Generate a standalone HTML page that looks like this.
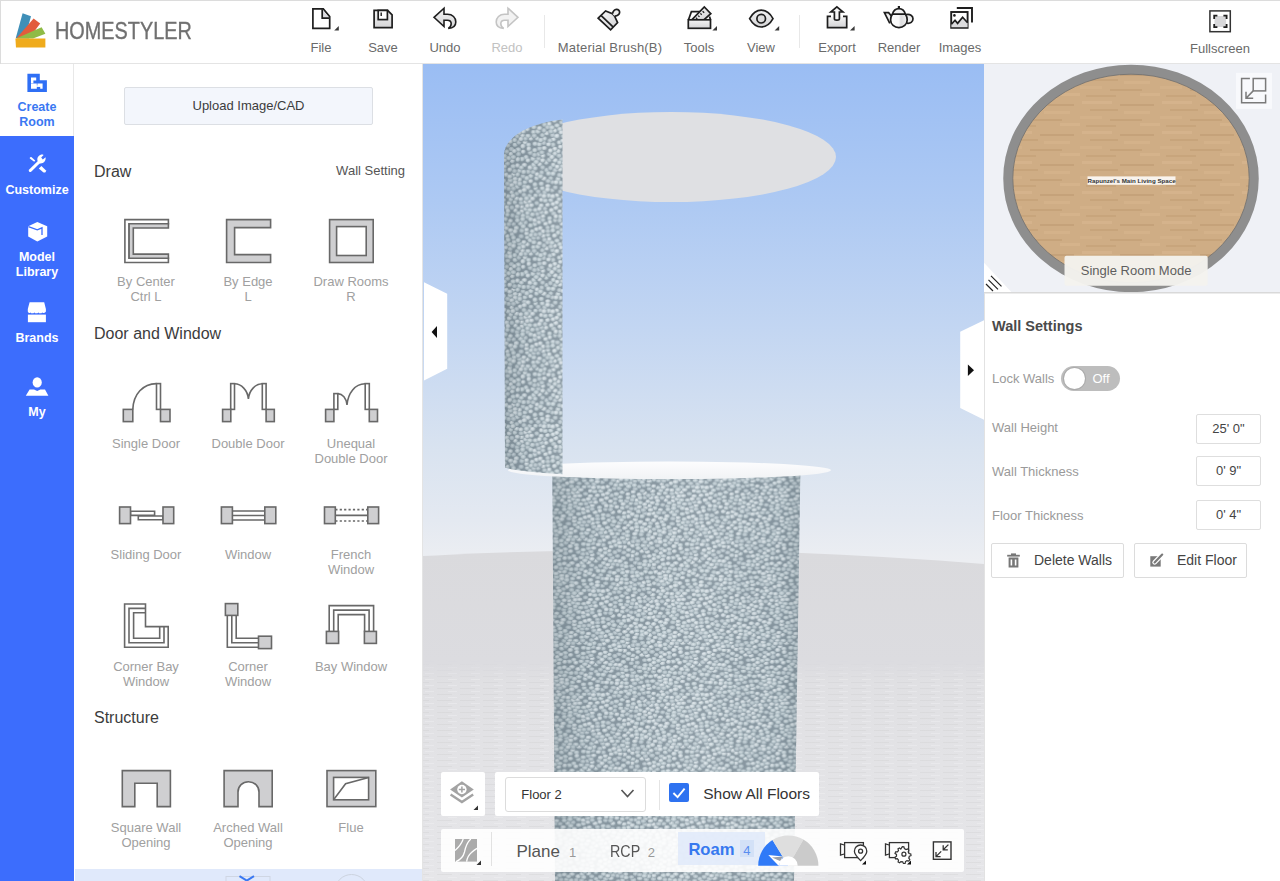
<!DOCTYPE html>
<html><head><meta charset="utf-8">
<style>
*{box-sizing:border-box;margin:0;padding:0}
html,body{width:1280px;height:881px;overflow:hidden;background:#fff;font-family:"Liberation Sans",sans-serif;position:relative}
.abs{position:absolute}
#frame{position:absolute;left:0;top:0;width:1280px;height:64px;border-top:1px solid #dcdcdc;border-left:1px solid #dcdcdc;pointer-events:none;z-index:50}
#header{position:absolute;left:0;top:0;width:1280px;height:64px;background:#fff;border-bottom:1px solid #e4e4e4}
.lbl{position:absolute;top:40px;font-size:13px;line-height:15px;color:#6a6a6a;white-space:nowrap;transform:translateX(-50%)}
.sep{position:absolute;top:15px;width:1px;height:33px;background:#e6e6e6}
#nav{position:absolute;left:0;top:64px;width:74px;height:817px;background:#3c6dfd}
#nav .cr{position:absolute;left:0;top:0;width:74px;height:72px;background:#fff;border-right:1px solid #e8e8e8}
.ni{position:absolute;left:0;width:74px;text-align:center;color:#fff;font-weight:bold;font-size:12.5px;line-height:15px}
#panel{position:absolute;left:75px;top:64px;width:349px;height:817px;background:#fff}
.sh{position:absolute;left:19px;font-size:16px;line-height:19px;color:#3c3c3c;white-space:nowrap}
.il{position:absolute;font-size:13px;line-height:15px;color:#a0a0a0;text-align:center;white-space:nowrap;transform:translateX(-50%);z-index:3}
#view{position:absolute;left:423px;top:64px;width:561px;height:817px;overflow:hidden}
.rl{position:absolute;left:8px;font-size:13px;line-height:15px;color:#9a9a9a;white-space:nowrap}
.inp{position:absolute;left:212px;width:65px;height:29.5px;border:1px solid #dedede;border-radius:2px;font-size:13px;line-height:27.5px;text-align:center;color:#444;background:#fff}
.btn{position:absolute;top:479px;height:35px;border:1px solid #dcdcdc;border-radius:2px;font-size:14px;line-height:33px;color:#444;padding-left:42px;background:#fff;white-space:nowrap}
#right{position:absolute;left:984px;top:64px;width:296px;height:817px;background:#fff}
</style></head><body>
<div id="frame"></div>
<div id="header">
<svg class="abs" style="left:0;top:0" width="60" height="64" viewBox="0 0 60 64">
<polygon points="15.8,38 22.6,13.2 31,16.2 25,38" fill="#3f8fb8"/>
<polygon points="16.2,38.4 33.6,18.4 40.2,23.6 29,38.4" fill="#e25c3c"/>
<polygon points="16,38.6 41.6,27.2 45.4,33.8 33,38.6" fill="#8fbb46"/>
<polygon points="15.4,38.4 45.4,38.4 45.4,47.6 16,47.6" fill="#efab1c"/>
</svg>
<div class="abs" style="left:55px;top:17px;font-size:23.5px;line-height:28px;color:#707070;-webkit-text-stroke:0.35px #707070;transform:scaleX(0.845);transform-origin:0 0;white-space:nowrap">HOMESTYLER</div>
<svg class="abs" style="left:0;top:0" width="1280" height="64" viewBox="0 0 1280 64">
<defs>
<linearGradient id="ig" x1="0" y1="0" x2="1" y2="1"><stop offset="0" stop-color="#fafafa"/><stop offset="1" stop-color="#d2d2d4"/></linearGradient>
<linearGradient id="igv" x1="0" y1="0" x2="0" y2="1"><stop offset="0" stop-color="#f4f4f4"/><stop offset="1" stop-color="#d4d4d6"/></linearGradient>
</defs>
<g fill="none" stroke="#1e1e1e" stroke-width="1.7" stroke-linejoin="miter">
<!-- file -->
<path d="M312.9,8.9 H323.3 L329.7,16.6 V28.3 H312.9 Z" fill="#fff"/>
<path d="M322.2,9.2 V18.2 H329.5" fill="#dcdce0"/>
<!-- save -->
<path d="M374.1,10.4 H387.6 L392.1,14.9 V27.7 H374.1 Z" fill="url(#igv)"/>
<rect x="378.2" y="10.4" width="9.2" height="9.2" fill="#fff"/>
<path d="M381.2,12.5 V16" stroke-width="1.4"/>
<!-- undo -->
<path d="M434,17.3 L444,8.2 V14.3 H447.5 C452.5,14.3 455.8,17.6 455.8,22 C455.8,25.8 452.8,28.2 448.3,28.4 C450.3,27.2 451.2,25.5 451.2,23.8 C451.2,21.6 449.5,20.3 447.3,20.3 H444 V26.5 Z" fill="url(#igv)" stroke-width="1.6"/>
<!-- redo -->
<path d="M497,17.3 L487,8.2 V14.3 H483.5 C478.5,14.3 475.2,17.6 475.2,22 C475.2,25.8 478.2,28.2 482.7,28.4 C480.7,27.2 479.8,25.5 479.8,23.8 C479.8,21.6 481.5,20.3 483.7,20.3 H487 V26.5 Z" fill="#f2f2f2" stroke="#c4c4c4" stroke-width="1.6" transform="translate(21,0)"/>
<!-- brush -->
<path d="M598.2,18.2 L605.6,11 L612.4,13.8 L614.6,16.2 L617.6,22.6 L610.6,29.8 Z" fill="url(#ig)"/>
<path d="M601.2,15.6 L613,26.8" />
<path d="M612.4,13.8 C613,11.5 614.2,9.6 616.4,9.4 C618.6,9.3 619.8,11 619.6,12.6 C619.4,14.6 617,15.8 614.6,16.2" fill="#eee"/>
<!-- tools -->
<path d="M688.5,19.8 L691.4,11.6 H700.5" />
<path d="M709.5,16.4 L710.5,19.8" />
<path d="M691.8,19.8 L704.3,7 L710.8,13.6 L703.8,19.8 Z" fill="url(#ig)"/>
<path d="M696,17.8 l1.3,1.3 M698.2,15.6 l1.3,1.3 M700.4,13.4 l1.3,1.3 M702.6,11.2 l1.6,1.6" stroke-width="1.3"/>
<rect x="688.3" y="19.8" width="22.2" height="8.5" fill="url(#igv)"/>
<!-- view -->
<path d="M749.6,18.6 C753,12.6 757,10.2 761.3,10.2 C765.6,10.2 769.6,12.6 773,18.6 C769.6,24.6 765.6,27 761.3,27 C757,27 753,24.6 749.6,18.6 Z" fill="url(#igv)"/>
<circle cx="761.2" cy="18.7" r="4.3" fill="#ddd"/>
<!-- export -->
<path d="M831,16.4 H827.5 V27.6 H846.7 V16.4 H843" fill="url(#igv)"/>
<path d="M836.9,6.8 L843,12 H839.4 V18.8 C839.4,19.8 838.6,20.2 836.9,20.2 C835.2,20.2 834.4,19.8 834.4,18.8 V12 H830.8 Z" fill="#f6f6f6"/>
<!-- render teapot -->
<linearGradient id="tpg" x1="0" y1="0" x2="1" y2="0"><stop offset="0" stop-color="#fff"/><stop offset="0.5" stop-color="#fafafa"/><stop offset="0.62" stop-color="#dcdcde"/><stop offset="1" stop-color="#f0f0f0"/></linearGradient>
<path d="M891.6,16.2 L888.6,12.6 H884.4 L889.8,23.4" fill="#eee"/>
<path d="M906,14.6 C910,13.6 913,15.8 913,18.8 C913,21.8 910.4,23.8 906.8,23.2" fill="#eee"/>
<path d="M892.4,14.2 H905.4 C906.6,15.8 907.2,18 907.2,20 C907.2,24.4 903.4,27.6 898.9,27.6 C894.4,27.6 890.6,24.4 890.6,20 C890.6,18 891.2,15.8 892.4,14.2 Z" fill="url(#tpg)"/>
<path d="M892.4,14.2 C893.4,10.6 895.8,8.6 898.9,8.6 C902,8.6 904.4,10.6 905.4,14.2 Z" fill="#f4f4f4"/>
<path d="M898.9,6 V8.6" stroke-width="2.2"/>
<!-- images -->
<path d="M956.8,8 H972 V22.4" stroke-width="1.9"/>
<rect x="951.2" y="12" width="16.4" height="15.8" fill="#fff" stroke-width="1.9"/>
<path d="M951.4,24.6 L955,20.4 L957.6,23.6 L962.6,17.4 L967.6,23 V27.2 H951.4 Z" fill="#dcdcde" stroke="none"/>
<path d="M951.4,24.2 L955,20.2 L957.6,23.4 L962.6,17.2 L967.6,22.8" stroke-width="1.7"/>
<circle cx="954.4" cy="15.4" r="1.3" fill="#1e1e1e" stroke="none"/>
<!-- fullscreen -->
<rect x="1209.9" y="10.9" width="20.4" height="20.8" stroke="#333" stroke-width="1.5" fill="#fff"/>
<rect x="1214.5" y="16" width="11.6" height="11" fill="#d8d8da" stroke="none"/>
<path d="M1214.2,19 V15.7 H1217.4 M1223.4,15.7 H1226.6 V19 M1226.6,24 V27.2 H1223.4 M1217.4,27.2 H1214.2 V24" stroke-width="1.8"/>
</g>
<g fill="#3a3a3a">
<path d="M334.2,30.6 L338.8,26 V30.6 Z"/>
<path d="M712.4,30.6 L717,26 V30.6 Z"/>
<path d="M774.6,30.6 L779.2,26 V30.6 Z"/>
<path d="M850,30.6 L854.6,26 V30.6 Z"/>
</g>
<rect x="544" y="15" width="1" height="33" fill="#e8e8e8"/>
<rect x="799" y="15" width="1" height="33" fill="#e8e8e8"/>
</svg>
<div class="lbl" style="left:321px">File</div>
<div class="lbl" style="left:383px">Save</div>
<div class="lbl" style="left:445px">Undo</div>
<div class="lbl" style="left:507px;color:#c2c2c2">Redo</div>
<div class="lbl" style="left:610px;letter-spacing:0.2px">Material Brush(B)</div>
<div class="lbl" style="left:699px">Tools</div>
<div class="lbl" style="left:761px">View</div>
<div class="lbl" style="left:837px">Export</div>
<div class="lbl" style="left:899px">Render</div>
<div class="lbl" style="left:960px">Images</div>
<div class="lbl" style="left:1220px;top:41px">Fullscreen</div>
</div>
<div id="nav"><div class="cr"></div>
<svg class="abs" style="left:0;top:-64px" width="74" height="420" viewBox="0 0 74 420">
<g fill="#2f6ff5">
<path d="M27.4,73.8 H39.8 V80.2 H46.9 V92 H27.4 Z"/>
</g>
<g fill="#fff">
<path d="M31,77.6 H36.2 V80.4 H33.4 V83.2 H31 Z"/>
<path d="M31,83.4 H36.8 V85.4 H40 V86.8 H36.8 V88.8 H31 Z"/>
<path d="M37.4,83.4 H42.6 V88.8 H40.2 V86.8 H37.4 Z" />
</g>
<g fill="#fff" stroke="none">
<path d="M29.2,169.4 L38.4,160.4 L40.6,162.6 L31.4,171.6 Q30.2,172.6 29.1,171.6 Q28.2,170.5 29.2,169.4 Z"/>
<path d="M38,161.6 C36.6,159.2 37.6,156.2 40.2,155 C41.4,154.5 42.6,154.5 43.6,154.9 L41.2,157.4 L42.8,159.4 L45.6,157.2 C46,159.6 45,161.8 42.8,163 C41.4,163.6 40,163.6 39,163.2 Z"/>
<path d="M29.8,158.6 C29.4,157.6 30.6,156.6 31.6,157.2 L35.2,160.6 L34.2,161.8 Z"/>
<path d="M38.8,168.6 L41.4,166 L45.8,170.2 Q46.4,171.6 45.2,172.4 Q44.2,172.8 43.2,172.2 Z"/>
</g>
<path d="M37.3,222 L47.2,226.2 V236.4 L37.3,241.6 L28.2,236.4 V226.2 Z" fill="#fff"/>
<path d="M28.4,226.6 L37.3,229.8 L42,227.8 V235" fill="none" stroke="#3c6dfd" stroke-width="1.3"/>
<path d="M29.6,302.2 H44.2 L45.9,309 V311.6 C45.2,313.2 43.6,313.4 42.3,312.4 C41.2,313.6 39.4,313.6 38.4,312.4 C37.2,313.6 35.4,313.6 34.4,312.4 C33.2,313.6 31.4,313.6 30.4,312.4 C29.4,313.4 28.2,313.2 27.8,311.6 V309 Z" fill="#fff"/>
<rect x="27.9" y="314.6" width="18" height="7.6" fill="#fff"/>
<ellipse cx="37.2" cy="382.4" rx="4.6" ry="5.2" fill="#fff"/>
<path d="M29.6,389.4 H34 L37.2,391 L40.4,389.4 H45 L48.4,395.8 H25.8 Z" fill="#fff"/>
</svg>
<div class="ni" style="top:36px;color:#3a78f2">Create<br>Room</div>
<div class="ni" style="top:119px">Customize</div>
<div class="ni" style="top:186px">Model<br>Library</div>
<div class="ni" style="top:267px">Brands</div>
<div class="ni" style="top:341px">My</div>
</div>
<div id="panel">
<div class="abs" style="left:49px;top:23px;width:249px;height:38px;background:#f3f6fc;border:1px solid #dcdfe4;border-radius:2px;font-size:13px;line-height:36px;text-align:center;color:#3c3c3c">Upload Image/CAD</div>
<div class="sh" style="top:98px">Draw</div>
<div class="abs" style="right:19px;top:99px;font-size:13px;line-height:15px;color:#555">Wall Setting</div>
<div class="sh" style="top:260px">Door and Window</div>
<div class="sh" style="top:644px">Structure</div>
</div>
<svg class="abs" style="left:0;top:0;z-index:2" width="424" height="881" viewBox="0 0 424 881">
<g stroke="#686868" stroke-width="1.6" fill="#fff">
<!-- by center -->
<path d="M168.4,219.6 H124.9 V262.5 H168.4 V258.3 H129.1 V223.8 H168.4 Z"/>
<path d="M168.4,223.8 H129.1 V258.3 H168.4 V254.1 H133.3 V228 H168.4 Z" fill="#cfcfd1"/>
<!-- by edge -->
<path d="M270.6,219.6 H226.6 V262.5 H270.6 V254.6 H234.6 V227.6 H270.6 Z" fill="#cfcfd1"/>
<!-- draw rooms -->
<rect x="329.6" y="219.6" width="43.6" height="42.9" fill="#cfcfd1"/>
<rect x="336.6" y="226.6" width="29.6" height="28.9" fill="#fff"/>
<!-- single door -->
<path d="M132.8,409.4 C133.4,394 143,383.8 156.5,383.6" fill="none"/>
<rect x="156.5" y="383.6" width="4" height="25.8"/>
<rect x="123.3" y="409.4" width="9.5" height="12.2" fill="#cfcfd1"/>
<rect x="160.5" y="409.4" width="9.5" height="12.2" fill="#cfcfd1"/>
<!-- double door -->
<path d="M234.5,383.8 C241.5,384 247.5,390 248.4,398.8 C249.3,390 255.3,384 262.3,383.8" fill="none"/>
<rect x="230.7" y="383.6" width="3.8" height="25.8"/>
<rect x="262.3" y="383.6" width="3.8" height="25.8"/>
<rect x="222.6" y="409.4" width="8.2" height="12.2" fill="#cfcfd1"/>
<rect x="266.1" y="409.4" width="8.2" height="12.2" fill="#cfcfd1"/>
<!-- unequal -->
<path d="M337.8,393.6 C342.5,393.8 346.4,398 347,405 C348,393 355,384 365,383.8" fill="none"/>
<rect x="333.9" y="393.6" width="3.9" height="15.8"/>
<rect x="365.2" y="383.6" width="4.1" height="25.8"/>
<rect x="325.6" y="409.4" width="8.3" height="12.2" fill="#cfcfd1"/>
<rect x="369.3" y="409.4" width="8.2" height="12.2" fill="#cfcfd1"/>
<!-- sliding door -->
<path d="M130.5,511.2 H154.6 V515.4 H130.5 Z"/>
<path d="M138.3,516 H163 V519.8 H138.3 Z"/>
<rect x="119.6" y="507" width="10.9" height="16.6" fill="#cfcfd1"/>
<rect x="163" y="507" width="10.7" height="16.6" fill="#cfcfd1"/>
<!-- window -->
<path d="M232.4,511 H264.8 M232.4,515.5 H264.8 M232.4,520 H264.8" fill="none"/>
<rect x="221.4" y="507" width="11" height="16.6" fill="#cfcfd1"/>
<rect x="264.8" y="507" width="11" height="16.6" fill="#cfcfd1"/>
<!-- french window -->
<path d="M335.3,515.4 H367.8" fill="none"/>
<path d="M335.3,509.6 H367.8 M335.3,521 H367.8" fill="none" stroke-dasharray="2.2,2.2"/>
<rect x="324.5" y="507" width="10.8" height="16.6" fill="#cfcfd1"/>
<rect x="367.8" y="507" width="10.8" height="16.6" fill="#cfcfd1"/>
<!-- corner bay -->
<path d="M124.6,604 H145.5 V626.6 H168.2 V647.2 H124.6 Z"/>
<path d="M145.5,608.4 H129 V642.7 H164 V626.6" fill="none"/>
<path d="M145.5,612.8 H133.6 V638.3 H159.7 V626.6" fill="none"/>
<!-- corner window -->
<path d="M227.3,615.4 V647.2 H258.5 M231.8,615.4 V642.7 H258.5 M236.2,615.4 V638.2 H258.5" fill="none"/>
<rect x="225.4" y="603.6" width="12.4" height="11.8" fill="#cfcfd1"/>
<rect x="258.5" y="636.2" width="13" height="12.4" fill="#cfcfd1"/>
<!-- bay window -->
<path d="M329.2,631.4 V605.6 H373.6 V631.4 M333.7,631.4 V610.1 H369.1 V631.4 M338.2,631.4 V614.6 H364.6 V631.4" fill="none"/>
<rect x="326.4" y="631.4" width="12.2" height="12" fill="#cfcfd1"/>
<rect x="364.4" y="631.4" width="12" height="12" fill="#cfcfd1"/>
<!-- square opening -->
<path d="M122.3,806.6 V770.6 H170.4 V806.6 H157.2 V783.2 H134.8 V806.6 Z" fill="#cfcfd1"/>
<!-- arched -->
<path d="M224.1,806.6 V770.6 H272.2 V806.6 H259 V792 C259,786 254.4,781.8 248.5,781.8 C242.6,781.8 238,786 238,792 V806.6 Z" fill="#cfcfd1"/>
<!-- flue -->
<rect x="327" y="770.6" width="48.8" height="36" fill="#cfcfd1"/>
<rect x="333.6" y="777.4" width="35" height="22.4"/>
<path d="M333.6,799.8 L345.6,783.8 L368.6,777.4" fill="none"/>
</g>
</svg>
<div class="il" style="left:146px;top:274px">By Center<br>Ctrl L</div>
<div class="il" style="left:248px;top:274px">By Edge<br>L</div>
<div class="il" style="left:351px;top:274px">Draw Rooms<br>R</div>
<div class="il" style="left:146px;top:436px">Single Door</div>
<div class="il" style="left:248px;top:436px">Double Door</div>
<div class="il" style="left:351px;top:436px">Unequal<br>Double Door</div>
<div class="il" style="left:146px;top:547px">Sliding Door</div>
<div class="il" style="left:248px;top:547px">Window</div>
<div class="il" style="left:351px;top:547px">French<br>Window</div>
<div class="il" style="left:146px;top:659px">Corner Bay<br>Window</div>
<div class="il" style="left:248px;top:659px">Corner<br>Window</div>
<div class="il" style="left:351px;top:659px">Bay Window</div>
<div class="il" style="left:146px;top:820px">Square Wall<br>Opening</div>
<div class="il" style="left:248px;top:820px">Arched Wall<br>Opening</div>
<div class="il" style="left:351px;top:820px">Flue</div>
<div class="abs" style="left:75px;top:869px;width:347px;height:12px;background:#e0e9fb"></div>
<div class="abs" style="left:422px;top:64px;width:1px;height:817px;background:#e4e4e4;z-index:4"></div>
<svg class="abs" style="left:0;top:860px;z-index:3" width="424" height="21" viewBox="0 860 424 21">
<rect x="226" y="876.5" width="44" height="10" fill="none" stroke="#cfd6e3" stroke-width="1"/>
<path d="M239.5,876.2 L246.8,880.6 L254,876.2" fill="none" stroke="#3a78f2" stroke-width="2"/>
<circle cx="351.5" cy="891" r="16.5" fill="none" stroke="#ccd3df" stroke-width="1"/>
</svg>

<div id="view">
<svg class="abs" style="left:0;top:0" width="561" height="817" viewBox="423 64 561 817">
<defs>
<linearGradient id="sky" x1="0" y1="64" x2="0" y2="560" gradientUnits="userSpaceOnUse">
<stop offset="0" stop-color="#9abdf3"/><stop offset="0.274" stop-color="#adc9f3"/><stop offset="0.536" stop-color="#c3d6f2"/><stop offset="0.778" stop-color="#d9e3f0"/><stop offset="0.92" stop-color="#e4e9f1"/><stop offset="1" stop-color="#eceef2"/>
</linearGradient>
<linearGradient id="gnd" x1="0" y1="550" x2="0" y2="881" gradientUnits="userSpaceOnUse">
<stop offset="0" stop-color="#dadadd"/><stop offset="0.34" stop-color="#dcdce0"/><stop offset="0.4" stop-color="#e0e0e3"/><stop offset="0.65" stop-color="#e3e3e6"/><stop offset="1" stop-color="#e6e6e9"/>
</linearGradient>
<radialGradient id="pga" cx="0.45" cy="0.4" r="0.56"><stop offset="0" stop-color="#dae3e8"/><stop offset="0.62" stop-color="#bccad0"/><stop offset="0.9" stop-color="#9babb3"/><stop offset="1" stop-color="#8a99a2"/></radialGradient>
<radialGradient id="pgb" cx="0.5" cy="0.42" r="0.56"><stop offset="0" stop-color="#ced9df"/><stop offset="0.62" stop-color="#b2c0c7"/><stop offset="0.9" stop-color="#95a5ae"/><stop offset="1" stop-color="#8695a0"/></radialGradient>
<radialGradient id="pgc" cx="0.4" cy="0.38" r="0.56"><stop offset="0" stop-color="#e4ebef"/><stop offset="0.62" stop-color="#c4d0d6"/><stop offset="0.9" stop-color="#a1b0b8"/><stop offset="1" stop-color="#8e9da6"/></radialGradient>
<pattern id="peb" width="144" height="144" patternUnits="userSpaceOnUse" patternTransform="scale(0.72)"><rect width="144" height="144" fill="#8796a0"/><ellipse cx="46.6" cy="21.7" rx="4.2" ry="2.9" fill="url(#pgc)"/><ellipse cx="77.2" cy="52.7" rx="3.8" ry="3.1" fill="url(#pga)"/><ellipse cx="5.4" cy="62.4" rx="3.8" ry="2.9" fill="url(#pga)"/><ellipse cx="61.1" cy="119.1" rx="3.9" ry="3.0" fill="url(#pgc)"/><ellipse cx="90.4" cy="136.5" rx="4.1" ry="3.1" fill="url(#pga)"/><ellipse cx="-3.4" cy="6.7" rx="4.3" ry="3.0" fill="url(#pgb)"/><ellipse cx="140.6" cy="6.7" rx="4.3" ry="3.0" fill="url(#pgb)"/><ellipse cx="20.8" cy="17.0" rx="4.0" ry="3.2" fill="url(#pgc)"/><ellipse cx="26.0" cy="83.8" rx="4.2" ry="3.0" fill="url(#pgb)"/><ellipse cx="78.9" cy="9.0" rx="3.8" ry="3.0" fill="url(#pga)"/><ellipse cx="98.0" cy="61.6" rx="4.0" ry="3.1" fill="url(#pgc)"/><ellipse cx="65.3" cy="43.2" rx="4.3" ry="3.2" fill="url(#pga)"/><ellipse cx="35.1" cy="82.7" rx="4.1" ry="3.3" fill="url(#pgb)"/><ellipse cx="105.0" cy="41.5" rx="4.4" ry="2.9" fill="url(#pgc)"/><ellipse cx="60.2" cy="109.0" rx="3.9" ry="3.1" fill="url(#pga)"/><ellipse cx="5.6" cy="96.2" rx="4.3" ry="3.1" fill="url(#pga)"/><ellipse cx="126.1" cy="45.2" rx="4.2" ry="3.1" fill="url(#pgc)"/><ellipse cx="83.5" cy="65.7" rx="4.3" ry="3.3" fill="url(#pgc)"/><ellipse cx="68.3" cy="95.6" rx="3.8" ry="3.2" fill="url(#pgc)"/><ellipse cx="93.2" cy="-1.0" rx="4.3" ry="3.0" fill="url(#pgc)"/><ellipse cx="93.2" cy="143.0" rx="4.3" ry="3.0" fill="url(#pgc)"/><ellipse cx="55.6" cy="96.3" rx="3.8" ry="3.1" fill="url(#pgc)"/><ellipse cx="8.5" cy="110.6" rx="3.9" ry="3.0" fill="url(#pgc)"/><ellipse cx="56.3" cy="125.5" rx="3.8" ry="3.1" fill="url(#pgb)"/><ellipse cx="79.1" cy="127.2" rx="4.3" ry="3.2" fill="url(#pgb)"/><ellipse cx="40.1" cy="59.8" rx="4.0" ry="3.3" fill="url(#pga)"/><ellipse cx="137.9" cy="21.7" rx="3.9" ry="3.0" fill="url(#pga)"/><ellipse cx="33.6" cy="69.8" rx="4.2" ry="3.0" fill="url(#pgb)"/><ellipse cx="53.2" cy="81.6" rx="4.4" ry="3.2" fill="url(#pga)"/><ellipse cx="74.2" cy="88.9" rx="4.2" ry="2.9" fill="url(#pgb)"/><ellipse cx="129.5" cy="112.3" rx="4.3" ry="3.2" fill="url(#pgb)"/><ellipse cx="56.5" cy="57.5" rx="3.9" ry="3.2" fill="url(#pgc)"/><ellipse cx="9.0" cy="9.7" rx="3.9" ry="3.0" fill="url(#pgc)"/><ellipse cx="49.0" cy="7.6" rx="3.8" ry="3.0" fill="url(#pgc)"/><ellipse cx="14.6" cy="52.4" rx="3.8" ry="3.2" fill="url(#pgc)"/><ellipse cx="88.4" cy="21.4" rx="4.0" ry="3.0" fill="url(#pga)"/><ellipse cx="52.4" cy="17.7" rx="4.3" ry="3.3" fill="url(#pga)"/><ellipse cx="67.1" cy="69.7" rx="3.9" ry="2.9" fill="url(#pga)"/><ellipse cx="49.3" cy="38.1" rx="4.3" ry="3.0" fill="url(#pgb)"/><ellipse cx="3.3" cy="136.9" rx="4.1" ry="3.0" fill="url(#pgc)"/><ellipse cx="147.3" cy="136.9" rx="4.1" ry="3.0" fill="url(#pgc)"/><ellipse cx="78.2" cy="3.9" rx="4.1" ry="3.3" fill="url(#pgc)"/><ellipse cx="78.2" cy="147.9" rx="4.1" ry="3.3" fill="url(#pgc)"/><ellipse cx="124.3" cy="100.3" rx="4.0" ry="3.0" fill="url(#pgc)"/><ellipse cx="24.1" cy="111.2" rx="4.1" ry="3.2" fill="url(#pgc)"/><ellipse cx="47.5" cy="32.1" rx="4.3" ry="3.3" fill="url(#pgb)"/><ellipse cx="122.8" cy="116.1" rx="4.3" ry="3.2" fill="url(#pgc)"/><ellipse cx="32.7" cy="74.5" rx="4.0" ry="2.9" fill="url(#pga)"/><ellipse cx="4.0" cy="40.2" rx="4.0" ry="3.2" fill="url(#pgc)"/><ellipse cx="148.0" cy="40.2" rx="4.0" ry="3.2" fill="url(#pgc)"/><ellipse cx="137.7" cy="64.4" rx="4.4" ry="3.3" fill="url(#pgb)"/><ellipse cx="137.5" cy="52.5" rx="3.9" ry="3.0" fill="url(#pgb)"/><ellipse cx="28.3" cy="29.4" rx="4.2" ry="3.3" fill="url(#pgb)"/><ellipse cx="121.0" cy="69.0" rx="4.2" ry="3.2" fill="url(#pgb)"/><ellipse cx="12.2" cy="95.1" rx="4.3" ry="3.2" fill="url(#pgb)"/><ellipse cx="108.0" cy="68.8" rx="3.9" ry="3.2" fill="url(#pgb)"/><ellipse cx="47.9" cy="115.3" rx="4.4" ry="3.1" fill="url(#pgc)"/><ellipse cx="57.8" cy="136.3" rx="4.2" ry="3.0" fill="url(#pgb)"/><ellipse cx="18.3" cy="21.8" rx="4.3" ry="3.2" fill="url(#pgc)"/><ellipse cx="21.0" cy="119.0" rx="4.4" ry="3.2" fill="url(#pgc)"/><ellipse cx="18.9" cy="2.1" rx="4.4" ry="3.2" fill="url(#pgc)"/><ellipse cx="18.9" cy="146.1" rx="4.4" ry="3.2" fill="url(#pgc)"/><ellipse cx="75.8" cy="134.4" rx="4.1" ry="3.2" fill="url(#pgb)"/><ellipse cx="119.0" cy="30.4" rx="4.0" ry="3.0" fill="url(#pgc)"/><ellipse cx="18.9" cy="131.0" rx="4.0" ry="3.1" fill="url(#pgb)"/><ellipse cx="84.0" cy="130.2" rx="4.1" ry="3.3" fill="url(#pga)"/><ellipse cx="72.2" cy="76.6" rx="4.1" ry="2.9" fill="url(#pgb)"/><ellipse cx="63.4" cy="26.4" rx="3.8" ry="3.2" fill="url(#pgb)"/><ellipse cx="24.8" cy="68.2" rx="4.2" ry="3.1" fill="url(#pga)"/><ellipse cx="46.9" cy="74.6" rx="4.1" ry="3.2" fill="url(#pgc)"/><ellipse cx="15.3" cy="80.7" rx="3.9" ry="3.0" fill="url(#pgc)"/><ellipse cx="111.2" cy="73.1" rx="4.1" ry="3.2" fill="url(#pga)"/><ellipse cx="131.4" cy="63.8" rx="4.2" ry="3.1" fill="url(#pgb)"/><ellipse cx="73.8" cy="99.8" rx="4.1" ry="3.1" fill="url(#pgb)"/><ellipse cx="68.8" cy="135.6" rx="4.2" ry="3.3" fill="url(#pga)"/><ellipse cx="135.7" cy="37.4" rx="4.1" ry="3.3" fill="url(#pga)"/><ellipse cx="121.0" cy="19.7" rx="3.9" ry="3.1" fill="url(#pgc)"/><ellipse cx="10.4" cy="34.7" rx="3.8" ry="3.2" fill="url(#pgc)"/><ellipse cx="112.9" cy="129.2" rx="3.9" ry="3.2" fill="url(#pga)"/><ellipse cx="95.1" cy="20.6" rx="4.3" ry="3.3" fill="url(#pga)"/><ellipse cx="31.6" cy="137.2" rx="4.0" ry="3.1" fill="url(#pgb)"/><ellipse cx="-1.5" cy="119.9" rx="3.9" ry="3.1" fill="url(#pga)"/><ellipse cx="142.5" cy="119.9" rx="3.9" ry="3.1" fill="url(#pga)"/><ellipse cx="28.2" cy="45.9" rx="4.2" ry="2.9" fill="url(#pgc)"/><ellipse cx="2.6" cy="47.7" rx="4.2" ry="3.1" fill="url(#pgb)"/><ellipse cx="146.6" cy="47.7" rx="4.2" ry="3.1" fill="url(#pgb)"/><ellipse cx="9.3" cy="-2.1" rx="4.3" ry="3.3" fill="url(#pgc)"/><ellipse cx="9.3" cy="141.9" rx="4.3" ry="3.3" fill="url(#pgc)"/><ellipse cx="15.1" cy="38.2" rx="3.8" ry="3.2" fill="url(#pgc)"/><ellipse cx="38.9" cy="18.7" rx="4.1" ry="3.3" fill="url(#pgc)"/><ellipse cx="117.9" cy="37.2" rx="3.9" ry="3.3" fill="url(#pgb)"/><ellipse cx="82.2" cy="100.9" rx="3.9" ry="2.9" fill="url(#pgb)"/><ellipse cx="10.4" cy="135.1" rx="4.2" ry="3.2" fill="url(#pgc)"/><ellipse cx="12.1" cy="123.3" rx="3.8" ry="3.2" fill="url(#pga)"/><ellipse cx="65.3" cy="48.8" rx="4.1" ry="3.3" fill="url(#pgb)"/><ellipse cx="75.9" cy="34.3" rx="3.9" ry="3.0" fill="url(#pgc)"/><ellipse cx="7.3" cy="29.1" rx="4.0" ry="3.0" fill="url(#pgc)"/><ellipse cx="72.0" cy="25.6" rx="4.0" ry="2.9" fill="url(#pgc)"/><ellipse cx="36.1" cy="2.2" rx="4.2" ry="3.1" fill="url(#pgc)"/><ellipse cx="36.1" cy="146.2" rx="4.2" ry="3.1" fill="url(#pgc)"/><ellipse cx="134.6" cy="15.3" rx="4.3" ry="3.1" fill="url(#pgb)"/><ellipse cx="71.3" cy="120.2" rx="4.0" ry="3.1" fill="url(#pgc)"/><ellipse cx="99.0" cy="-2.5" rx="4.0" ry="3.2" fill="url(#pgc)"/><ellipse cx="99.0" cy="141.5" rx="4.0" ry="3.2" fill="url(#pgc)"/><ellipse cx="101.8" cy="91.6" rx="4.0" ry="3.0" fill="url(#pga)"/><ellipse cx="7.8" cy="18.7" rx="3.8" ry="3.2" fill="url(#pga)"/><ellipse cx="36.8" cy="23.5" rx="3.9" ry="3.2" fill="url(#pgb)"/><ellipse cx="40.6" cy="34.9" rx="4.0" ry="3.1" fill="url(#pgc)"/><ellipse cx="37.9" cy="138.5" rx="4.4" ry="3.1" fill="url(#pgc)"/><ellipse cx="44.6" cy="51.3" rx="3.8" ry="3.1" fill="url(#pga)"/><ellipse cx="12.9" cy="57.5" rx="3.8" ry="2.9" fill="url(#pgb)"/><ellipse cx="84.3" cy="76.2" rx="4.3" ry="3.2" fill="url(#pga)"/><ellipse cx="103.1" cy="126.6" rx="4.0" ry="3.0" fill="url(#pgc)"/><ellipse cx="6.3" cy="120.3" rx="4.3" ry="3.2" fill="url(#pgb)"/><ellipse cx="105.7" cy="117.0" rx="3.9" ry="3.1" fill="url(#pgb)"/><ellipse cx="115.9" cy="119.0" rx="4.2" ry="3.3" fill="url(#pgc)"/><ellipse cx="98.3" cy="99.8" rx="3.9" ry="2.9" fill="url(#pgb)"/><ellipse cx="80.4" cy="90.4" rx="4.2" ry="3.2" fill="url(#pgc)"/><ellipse cx="70.5" cy="0.5" rx="4.3" ry="3.2" fill="url(#pgb)"/><ellipse cx="70.5" cy="144.5" rx="4.3" ry="3.2" fill="url(#pgb)"/><ellipse cx="94.9" cy="9.5" rx="4.2" ry="3.0" fill="url(#pgb)"/><ellipse cx="105.0" cy="29.6" rx="4.2" ry="3.3" fill="url(#pga)"/><ellipse cx="71.1" cy="55.1" rx="4.1" ry="3.2" fill="url(#pga)"/><ellipse cx="110.4" cy="88.8" rx="4.2" ry="2.9" fill="url(#pgc)"/><ellipse cx="21.2" cy="36.6" rx="4.2" ry="3.0" fill="url(#pga)"/><ellipse cx="97.3" cy="41.9" rx="4.1" ry="3.1" fill="url(#pgb)"/><ellipse cx="67.2" cy="17.1" rx="4.3" ry="3.0" fill="url(#pgb)"/><ellipse cx="-3.1" cy="134.8" rx="3.8" ry="3.1" fill="url(#pgc)"/><ellipse cx="140.9" cy="134.8" rx="3.8" ry="3.1" fill="url(#pgc)"/><ellipse cx="118.1" cy="139.4" rx="4.1" ry="3.0" fill="url(#pga)"/><ellipse cx="20.4" cy="75.5" rx="4.4" ry="3.0" fill="url(#pga)"/><ellipse cx="118.1" cy="73.3" rx="4.3" ry="3.2" fill="url(#pga)"/><ellipse cx="33.3" cy="129.3" rx="4.1" ry="2.9" fill="url(#pgc)"/><ellipse cx="0.5" cy="70.8" rx="4.1" ry="3.0" fill="url(#pga)"/><ellipse cx="144.5" cy="70.8" rx="4.1" ry="3.0" fill="url(#pga)"/><ellipse cx="20.3" cy="49.5" rx="4.0" ry="3.2" fill="url(#pga)"/><ellipse cx="0.3" cy="108.1" rx="4.3" ry="2.9" fill="url(#pga)"/><ellipse cx="144.3" cy="108.1" rx="4.3" ry="2.9" fill="url(#pga)"/><ellipse cx="133.4" cy="102.7" rx="4.3" ry="3.0" fill="url(#pgb)"/><ellipse cx="-0.2" cy="84.8" rx="4.0" ry="3.1" fill="url(#pga)"/><ellipse cx="143.8" cy="84.8" rx="4.0" ry="3.1" fill="url(#pga)"/><ellipse cx="39.6" cy="7.0" rx="3.9" ry="3.2" fill="url(#pgb)"/><ellipse cx="35.9" cy="38.3" rx="4.1" ry="3.0" fill="url(#pgb)"/><ellipse cx="90.8" cy="131.5" rx="4.4" ry="3.1" fill="url(#pgc)"/><ellipse cx="103.6" cy="7.1" rx="4.2" ry="3.1" fill="url(#pgc)"/><ellipse cx="42.9" cy="106.4" rx="4.4" ry="3.0" fill="url(#pgc)"/><ellipse cx="80.3" cy="56.8" rx="3.9" ry="3.0" fill="url(#pgc)"/><ellipse cx="130.5" cy="-0.5" rx="4.1" ry="3.0" fill="url(#pgb)"/><ellipse cx="130.5" cy="143.5" rx="4.1" ry="3.0" fill="url(#pgb)"/><ellipse cx="27.7" cy="13.1" rx="4.0" ry="2.9" fill="url(#pga)"/><ellipse cx="108.0" cy="59.4" rx="4.0" ry="3.1" fill="url(#pga)"/><ellipse cx="54.3" cy="48.7" rx="3.8" ry="3.0" fill="url(#pgc)"/><ellipse cx="57.6" cy="64.2" rx="4.4" ry="3.2" fill="url(#pga)"/><ellipse cx="125.7" cy="3.1" rx="3.8" ry="3.2" fill="url(#pga)"/><ellipse cx="125.7" cy="147.1" rx="3.8" ry="3.2" fill="url(#pga)"/><ellipse cx="129.0" cy="68.2" rx="4.2" ry="2.9" fill="url(#pgc)"/><ellipse cx="118.9" cy="123.2" rx="4.4" ry="3.0" fill="url(#pgb)"/><ellipse cx="93.2" cy="110.1" rx="4.1" ry="3.1" fill="url(#pgb)"/><ellipse cx="91.6" cy="100.6" rx="3.9" ry="2.9" fill="url(#pga)"/><ellipse cx="75.5" cy="83.9" rx="4.0" ry="3.0" fill="url(#pga)"/><ellipse cx="86.6" cy="1.5" rx="4.0" ry="3.1" fill="url(#pga)"/><ellipse cx="86.6" cy="145.5" rx="4.0" ry="3.1" fill="url(#pga)"/><ellipse cx="138.1" cy="92.8" rx="4.3" ry="3.1" fill="url(#pgc)"/><ellipse cx="44.3" cy="3.1" rx="4.1" ry="3.2" fill="url(#pgc)"/><ellipse cx="44.3" cy="147.1" rx="4.1" ry="3.2" fill="url(#pgc)"/><ellipse cx="60.5" cy="37.0" rx="4.2" ry="3.3" fill="url(#pga)"/><ellipse cx="48.7" cy="60.6" rx="4.2" ry="3.0" fill="url(#pgb)"/><ellipse cx="114.8" cy="106.4" rx="4.1" ry="3.0" fill="url(#pga)"/><ellipse cx="-4.3" cy="44.9" rx="4.3" ry="3.0" fill="url(#pgb)"/><ellipse cx="139.7" cy="44.9" rx="4.3" ry="3.0" fill="url(#pgb)"/><ellipse cx="31.9" cy="109.5" rx="4.0" ry="3.3" fill="url(#pgc)"/><ellipse cx="32.2" cy="60.1" rx="4.2" ry="3.3" fill="url(#pga)"/><ellipse cx="21.1" cy="56.7" rx="3.9" ry="3.3" fill="url(#pgb)"/><ellipse cx="20.4" cy="7.5" rx="3.8" ry="3.1" fill="url(#pga)"/><ellipse cx="129.3" cy="127.2" rx="4.2" ry="3.3" fill="url(#pga)"/><ellipse cx="134.1" cy="47.4" rx="3.9" ry="3.3" fill="url(#pgb)"/><ellipse cx="95.7" cy="54.5" rx="4.0" ry="3.0" fill="url(#pgb)"/><ellipse cx="138.9" cy="29.9" rx="4.0" ry="3.2" fill="url(#pgb)"/><ellipse cx="118.4" cy="62.3" rx="3.8" ry="3.1" fill="url(#pga)"/><ellipse cx="53.7" cy="132.4" rx="3.9" ry="3.0" fill="url(#pgc)"/><ellipse cx="110.4" cy="5.9" rx="3.8" ry="2.9" fill="url(#pga)"/><ellipse cx="37.8" cy="103.2" rx="4.0" ry="3.0" fill="url(#pgb)"/><ellipse cx="132.0" cy="91.3" rx="4.4" ry="2.9" fill="url(#pgb)"/><ellipse cx="133.6" cy="26.3" rx="4.3" ry="3.2" fill="url(#pgb)"/><ellipse cx="118.5" cy="111.3" rx="4.2" ry="3.0" fill="url(#pgc)"/><ellipse cx="112.6" cy="11.4" rx="3.9" ry="3.2" fill="url(#pgc)"/><ellipse cx="4.9" cy="79.6" rx="4.0" ry="3.3" fill="url(#pga)"/><ellipse cx="148.9" cy="79.6" rx="4.0" ry="3.3" fill="url(#pga)"/><ellipse cx="38.1" cy="12.1" rx="3.9" ry="3.1" fill="url(#pga)"/><ellipse cx="107.7" cy="122.0" rx="4.2" ry="2.9" fill="url(#pgc)"/><ellipse cx="121.1" cy="42.3" rx="4.1" ry="3.0" fill="url(#pgc)"/><ellipse cx="83.3" cy="47.0" rx="4.0" ry="3.3" fill="url(#pgb)"/><ellipse cx="116.4" cy="94.1" rx="4.4" ry="2.9" fill="url(#pgb)"/><ellipse cx="121.0" cy="131.7" rx="3.8" ry="3.0" fill="url(#pgb)"/><ellipse cx="17.2" cy="27.3" rx="4.4" ry="3.1" fill="url(#pgb)"/><ellipse cx="124.7" cy="64.7" rx="4.0" ry="3.2" fill="url(#pgc)"/><ellipse cx="31.3" cy="53.1" rx="3.9" ry="3.0" fill="url(#pgb)"/><ellipse cx="93.8" cy="29.3" rx="3.8" ry="3.0" fill="url(#pga)"/><ellipse cx="114.5" cy="78.9" rx="3.8" ry="2.9" fill="url(#pgb)"/><ellipse cx="23.6" cy="100.1" rx="4.0" ry="3.0" fill="url(#pgb)"/><ellipse cx="44.3" cy="137.3" rx="4.0" ry="3.1" fill="url(#pgc)"/><ellipse cx="52.4" cy="28.4" rx="4.2" ry="3.0" fill="url(#pgc)"/><ellipse cx="0.8" cy="129.8" rx="4.1" ry="3.2" fill="url(#pga)"/><ellipse cx="144.8" cy="129.8" rx="4.1" ry="3.2" fill="url(#pga)"/><ellipse cx="12.8" cy="89.6" rx="4.0" ry="3.1" fill="url(#pga)"/><ellipse cx="15.7" cy="70.6" rx="4.3" ry="3.3" fill="url(#pgb)"/><ellipse cx="28.4" cy="18.2" rx="4.4" ry="3.3" fill="url(#pga)"/><ellipse cx="69.5" cy="7.7" rx="4.4" ry="3.1" fill="url(#pgb)"/><ellipse cx="113.2" cy="32.0" rx="4.0" ry="3.2" fill="url(#pgb)"/><ellipse cx="90.3" cy="44.1" rx="4.1" ry="3.1" fill="url(#pga)"/><ellipse cx="64.3" cy="63.1" rx="3.8" ry="3.1" fill="url(#pgc)"/><ellipse cx="110.0" cy="112.3" rx="4.1" ry="3.0" fill="url(#pgc)"/><ellipse cx="18.5" cy="62.0" rx="3.9" ry="3.1" fill="url(#pgb)"/><ellipse cx="27.9" cy="-2.6" rx="4.1" ry="3.3" fill="url(#pga)"/><ellipse cx="27.9" cy="141.4" rx="4.1" ry="3.3" fill="url(#pga)"/><ellipse cx="113.5" cy="134.0" rx="3.8" ry="3.0" fill="url(#pgc)"/><ellipse cx="108.9" cy="22.9" rx="4.3" ry="3.0" fill="url(#pgc)"/><ellipse cx="72.9" cy="45.9" rx="3.8" ry="3.0" fill="url(#pgc)"/><ellipse cx="23.2" cy="134.8" rx="4.2" ry="3.3" fill="url(#pga)"/><ellipse cx="125.7" cy="79.9" rx="4.1" ry="3.3" fill="url(#pga)"/><ellipse cx="51.9" cy="110.1" rx="4.1" ry="3.0" fill="url(#pgc)"/><ellipse cx="84.4" cy="95.6" rx="4.0" ry="2.9" fill="url(#pgb)"/><ellipse cx="88.7" cy="62.2" rx="4.1" ry="3.3" fill="url(#pga)"/><ellipse cx="84.8" cy="29.4" rx="4.2" ry="3.1" fill="url(#pgc)"/><ellipse cx="117.1" cy="25.1" rx="4.0" ry="3.0" fill="url(#pgb)"/><ellipse cx="7.0" cy="128.1" rx="4.3" ry="3.2" fill="url(#pgb)"/><ellipse cx="100.1" cy="121.7" rx="4.2" ry="3.0" fill="url(#pgb)"/><ellipse cx="38.2" cy="92.4" rx="4.4" ry="3.0" fill="url(#pgc)"/><ellipse cx="107.1" cy="136.0" rx="4.2" ry="3.0" fill="url(#pgc)"/><ellipse cx="63.0" cy="104.3" rx="4.1" ry="3.0" fill="url(#pgc)"/><ellipse cx="30.5" cy="89.7" rx="3.8" ry="3.3" fill="url(#pgc)"/><ellipse cx="4.1" cy="6.0" rx="4.2" ry="3.2" fill="url(#pgb)"/><ellipse cx="148.1" cy="6.0" rx="4.2" ry="3.2" fill="url(#pgb)"/><ellipse cx="100.4" cy="106.1" rx="3.8" ry="3.1" fill="url(#pgc)"/><ellipse cx="131.7" cy="136.0" rx="3.9" ry="3.0" fill="url(#pgc)"/><ellipse cx="91.3" cy="118.8" rx="4.2" ry="3.0" fill="url(#pga)"/><ellipse cx="14.4" cy="14.1" rx="4.3" ry="3.0" fill="url(#pgc)"/><ellipse cx="138.8" cy="72.5" rx="4.3" ry="3.1" fill="url(#pgb)"/><ellipse cx="49.9" cy="101.5" rx="4.1" ry="3.0" fill="url(#pga)"/><ellipse cx="124.2" cy="13.1" rx="4.3" ry="3.0" fill="url(#pga)"/><ellipse cx="109.8" cy="-3.2" rx="3.8" ry="3.1" fill="url(#pgb)"/><ellipse cx="109.8" cy="140.8" rx="3.8" ry="3.1" fill="url(#pgb)"/><ellipse cx="70.8" cy="114.7" rx="3.9" ry="3.1" fill="url(#pgc)"/><ellipse cx="50.0" cy="119.8" rx="4.0" ry="3.3" fill="url(#pgc)"/><ellipse cx="100.7" cy="71.8" rx="3.9" ry="3.2" fill="url(#pgb)"/><ellipse cx="100.4" cy="113.3" rx="4.2" ry="3.0" fill="url(#pgc)"/><ellipse cx="29.7" cy="37.9" rx="4.3" ry="3.1" fill="url(#pga)"/><ellipse cx="76.5" cy="108.6" rx="4.3" ry="3.2" fill="url(#pgc)"/><ellipse cx="24.4" cy="63.2" rx="4.3" ry="3.1" fill="url(#pgb)"/><ellipse cx="127.5" cy="34.3" rx="3.9" ry="3.0" fill="url(#pga)"/><ellipse cx="35.7" cy="47.0" rx="4.1" ry="3.0" fill="url(#pgc)"/><ellipse cx="14.7" cy="138.6" rx="3.9" ry="3.1" fill="url(#pgc)"/><ellipse cx="-2.3" cy="114.5" rx="4.2" ry="3.1" fill="url(#pga)"/><ellipse cx="141.7" cy="114.5" rx="4.2" ry="3.1" fill="url(#pga)"/><ellipse cx="55.9" cy="4.9" rx="4.0" ry="3.2" fill="url(#pga)"/><ellipse cx="91.1" cy="66.7" rx="3.9" ry="3.1" fill="url(#pga)"/><ellipse cx="82.7" cy="107.9" rx="4.1" ry="3.0" fill="url(#pgc)"/><ellipse cx="111.5" cy="100.8" rx="4.3" ry="3.2" fill="url(#pga)"/><ellipse cx="45.1" cy="90.5" rx="3.9" ry="3.1" fill="url(#pga)"/><ellipse cx="90.7" cy="36.0" rx="4.1" ry="3.1" fill="url(#pga)"/><ellipse cx="97.2" cy="133.9" rx="3.9" ry="3.2" fill="url(#pgc)"/><ellipse cx="112.1" cy="56.0" rx="4.1" ry="3.3" fill="url(#pgb)"/><ellipse cx="30.3" cy="98.5" rx="4.0" ry="3.2" fill="url(#pgb)"/><ellipse cx="31.5" cy="115.4" rx="4.0" ry="3.0" fill="url(#pgb)"/><ellipse cx="67.6" cy="80.9" rx="3.9" ry="3.3" fill="url(#pgc)"/><ellipse cx="50.9" cy="92.0" rx="4.3" ry="3.2" fill="url(#pgb)"/><ellipse cx="79.0" cy="18.0" rx="4.3" ry="3.0" fill="url(#pgc)"/><ellipse cx="43.5" cy="69.1" rx="4.1" ry="3.2" fill="url(#pgb)"/><ellipse cx="133.7" cy="123.0" rx="3.8" ry="3.2" fill="url(#pgb)"/><ellipse cx="24.2" cy="128.3" rx="4.2" ry="3.2" fill="url(#pgc)"/><ellipse cx="96.3" cy="128.7" rx="4.3" ry="3.2" fill="url(#pgb)"/><ellipse cx="63.2" cy="127.1" rx="4.1" ry="3.0" fill="url(#pgb)"/><ellipse cx="91.7" cy="91.6" rx="3.8" ry="3.1" fill="url(#pga)"/><ellipse cx="47.6" cy="-2.6" rx="4.1" ry="3.1" fill="url(#pgc)"/><ellipse cx="47.6" cy="141.4" rx="4.1" ry="3.1" fill="url(#pgc)"/><ellipse cx="52.7" cy="68.3" rx="4.1" ry="3.2" fill="url(#pgc)"/><ellipse cx="60.8" cy="79.8" rx="4.3" ry="3.0" fill="url(#pgc)"/><ellipse cx="72.5" cy="39.1" rx="4.1" ry="3.3" fill="url(#pgc)"/><ellipse cx="47.6" cy="45.7" rx="4.0" ry="3.1" fill="url(#pgb)"/><ellipse cx="5.8" cy="104.1" rx="4.3" ry="3.1" fill="url(#pgb)"/><ellipse cx="0.9" cy="27.4" rx="4.4" ry="3.1" fill="url(#pga)"/><ellipse cx="144.9" cy="27.4" rx="4.4" ry="3.1" fill="url(#pga)"/><ellipse cx="100.3" cy="85.9" rx="4.2" ry="3.0" fill="url(#pga)"/><ellipse cx="26.1" cy="5.3" rx="4.3" ry="3.3" fill="url(#pgc)"/><ellipse cx="80.9" cy="37.2" rx="4.0" ry="3.1" fill="url(#pga)"/><ellipse cx="2.0" cy="55.7" rx="4.2" ry="3.3" fill="url(#pga)"/><ellipse cx="146.0" cy="55.7" rx="4.2" ry="3.3" fill="url(#pga)"/><ellipse cx="59.4" cy="14.7" rx="4.2" ry="3.0" fill="url(#pga)"/><ellipse cx="103.6" cy="34.9" rx="4.2" ry="3.0" fill="url(#pgb)"/><ellipse cx="105.1" cy="12.1" rx="4.2" ry="3.2" fill="url(#pgb)"/><ellipse cx="103.3" cy="1.6" rx="3.8" ry="3.2" fill="url(#pgc)"/><ellipse cx="103.3" cy="145.6" rx="3.8" ry="3.2" fill="url(#pgc)"/><ellipse cx="81.6" cy="42.1" rx="3.8" ry="3.3" fill="url(#pgc)"/><ellipse cx="60.8" cy="84.5" rx="4.3" ry="3.3" fill="url(#pgc)"/><ellipse cx="49.9" cy="12.2" rx="4.1" ry="3.2" fill="url(#pga)"/><ellipse cx="114.0" cy="66.2" rx="3.9" ry="3.2" fill="url(#pgb)"/><ellipse cx="127.5" cy="75.1" rx="4.1" ry="3.1" fill="url(#pgb)"/><ellipse cx="58.0" cy="74.5" rx="3.9" ry="2.9" fill="url(#pgc)"/><ellipse cx="136.3" cy="110.5" rx="4.3" ry="3.3" fill="url(#pga)"/><ellipse cx="131.0" cy="9.2" rx="4.2" ry="3.1" fill="url(#pgb)"/><ellipse cx="-4.9" cy="-1.2" rx="3.9" ry="2.9" fill="url(#pgb)"/><ellipse cx="-4.9" cy="142.8" rx="3.9" ry="2.9" fill="url(#pgb)"/><ellipse cx="139.1" cy="-1.2" rx="3.9" ry="2.9" fill="url(#pgb)"/><ellipse cx="139.1" cy="142.8" rx="3.9" ry="2.9" fill="url(#pgb)"/><ellipse cx="120.6" cy="6.8" rx="4.3" ry="3.2" fill="url(#pgc)"/><ellipse cx="15.2" cy="46.6" rx="4.0" ry="2.9" fill="url(#pga)"/><ellipse cx="121.3" cy="90.5" rx="4.1" ry="3.0" fill="url(#pgb)"/><ellipse cx="31.9" cy="8.2" rx="4.2" ry="3.1" fill="url(#pgc)"/><ellipse cx="120.9" cy="48.2" rx="3.9" ry="3.1" fill="url(#pga)"/><ellipse cx="45.8" cy="130.1" rx="3.9" ry="3.3" fill="url(#pga)"/><ellipse cx="37.1" cy="29.0" rx="4.0" ry="3.3" fill="url(#pga)"/><ellipse cx="87.6" cy="71.3" rx="4.0" ry="3.0" fill="url(#pgb)"/><ellipse cx="116.9" cy="83.9" rx="3.9" ry="2.9" fill="url(#pgb)"/><ellipse cx="52.9" cy="23.5" rx="4.0" ry="3.1" fill="url(#pgb)"/><ellipse cx="64.2" cy="74.3" rx="3.9" ry="3.2" fill="url(#pga)"/><ellipse cx="4.3" cy="13.9" rx="4.2" ry="3.0" fill="url(#pgc)"/><ellipse cx="148.3" cy="13.9" rx="4.2" ry="3.0" fill="url(#pgc)"/><ellipse cx="58.4" cy="19.7" rx="4.2" ry="3.2" fill="url(#pgc)"/><ellipse cx="111.9" cy="48.8" rx="3.9" ry="3.0" fill="url(#pgb)"/><ellipse cx="62.7" cy="-2.7" rx="4.3" ry="3.3" fill="url(#pgc)"/><ellipse cx="62.7" cy="141.3" rx="4.3" ry="3.3" fill="url(#pgc)"/><ellipse cx="7.7" cy="74.5" rx="4.4" ry="3.3" fill="url(#pgc)"/><ellipse cx="74.9" cy="62.5" rx="4.4" ry="3.0" fill="url(#pgc)"/><ellipse cx="17.3" cy="85.6" rx="4.4" ry="3.1" fill="url(#pgb)"/><ellipse cx="80.2" cy="70.8" rx="4.0" ry="3.3" fill="url(#pgb)"/><ellipse cx="42.6" cy="111.2" rx="3.9" ry="2.9" fill="url(#pgb)"/><ellipse cx="15.7" cy="32.4" rx="4.4" ry="3.2" fill="url(#pgb)"/><ellipse cx="106.4" cy="107.0" rx="4.3" ry="3.1" fill="url(#pga)"/><ellipse cx="87.5" cy="54.7" rx="4.1" ry="3.1" fill="url(#pga)"/><ellipse cx="83.7" cy="12.7" rx="4.4" ry="3.0" fill="url(#pga)"/><ellipse cx="50.6" cy="136.5" rx="4.2" ry="3.1" fill="url(#pgb)"/><ellipse cx="63.4" cy="89.9" rx="4.4" ry="3.0" fill="url(#pga)"/><ellipse cx="76.3" cy="117.5" rx="3.9" ry="3.0" fill="url(#pga)"/><ellipse cx="22.5" cy="41.7" rx="4.1" ry="3.1" fill="url(#pga)"/><ellipse cx="90.7" cy="86.9" rx="4.0" ry="3.3" fill="url(#pga)"/><ellipse cx="44.2" cy="99.5" rx="3.8" ry="3.0" fill="url(#pgc)"/><ellipse cx="109.4" cy="15.4" rx="3.9" ry="3.0" fill="url(#pgb)"/><ellipse cx="103.0" cy="51.0" rx="3.9" ry="3.0" fill="url(#pgc)"/><ellipse cx="64.8" cy="55.5" rx="3.8" ry="3.3" fill="url(#pgc)"/><ellipse cx="83.9" cy="138.2" rx="4.1" ry="3.1" fill="url(#pga)"/><ellipse cx="58.1" cy="9.4" rx="3.9" ry="3.2" fill="url(#pga)"/><ellipse cx="95.7" cy="49.2" rx="3.9" ry="3.2" fill="url(#pgb)"/><ellipse cx="129.5" cy="84.6" rx="4.0" ry="3.0" fill="url(#pga)"/><ellipse cx="25.5" cy="122.5" rx="4.0" ry="3.2" fill="url(#pga)"/><ellipse cx="18.2" cy="103.2" rx="4.0" ry="3.1" fill="url(#pgb)"/><ellipse cx="62.6" cy="98.5" rx="4.0" ry="2.9" fill="url(#pgb)"/><ellipse cx="16.0" cy="114.0" rx="3.9" ry="3.3" fill="url(#pga)"/><ellipse cx="8.6" cy="51.5" rx="4.0" ry="3.0" fill="url(#pga)"/><ellipse cx="118.0" cy="101.6" rx="4.3" ry="3.3" fill="url(#pgc)"/><ellipse cx="12.9" cy="5.8" rx="4.1" ry="3.0" fill="url(#pgc)"/><ellipse cx="124.6" cy="-3.7" rx="4.4" ry="3.1" fill="url(#pgb)"/><ellipse cx="124.6" cy="140.3" rx="4.4" ry="3.1" fill="url(#pgb)"/><ellipse cx="42.8" cy="82.2" rx="4.4" ry="3.1" fill="url(#pga)"/><ellipse cx="138.2" cy="81.1" rx="4.3" ry="3.0" fill="url(#pgc)"/><ellipse cx="97.2" cy="36.7" rx="3.9" ry="3.1" fill="url(#pga)"/><ellipse cx="72.3" cy="125.7" rx="4.3" ry="2.9" fill="url(#pga)"/><ellipse cx="121.7" cy="56.7" rx="4.3" ry="3.1" fill="url(#pgc)"/><ellipse cx="84.8" cy="6.3" rx="3.9" ry="3.0" fill="url(#pga)"/><ellipse cx="135.2" cy="98.1" rx="4.0" ry="3.2" fill="url(#pga)"/><ellipse cx="104.6" cy="79.4" rx="4.4" ry="3.0" fill="url(#pgc)"/><ellipse cx="129.5" cy="39.7" rx="4.0" ry="2.9" fill="url(#pgc)"/><ellipse cx="86.8" cy="124.4" rx="4.2" ry="3.0" fill="url(#pga)"/><ellipse cx="27.1" cy="77.3" rx="4.3" ry="3.2" fill="url(#pga)"/><ellipse cx="6.5" cy="90.2" rx="4.0" ry="3.1" fill="url(#pga)"/><ellipse cx="80.0" cy="26.2" rx="4.4" ry="3.0" fill="url(#pga)"/><ellipse cx="124.3" cy="26.3" rx="4.3" ry="3.3" fill="url(#pgc)"/><ellipse cx="2.9" cy="-1.3" rx="4.0" ry="3.3" fill="url(#pga)"/><ellipse cx="2.9" cy="142.7" rx="4.0" ry="3.3" fill="url(#pga)"/><ellipse cx="146.9" cy="-1.3" rx="4.0" ry="3.3" fill="url(#pga)"/><ellipse cx="146.9" cy="142.7" rx="4.0" ry="3.3" fill="url(#pga)"/><ellipse cx="127.2" cy="105.3" rx="4.0" ry="3.0" fill="url(#pga)"/><ellipse cx="78.3" cy="79.0" rx="4.2" ry="3.3" fill="url(#pga)"/><ellipse cx="36.7" cy="88.0" rx="4.0" ry="3.0" fill="url(#pga)"/><ellipse cx="93.1" cy="79.0" rx="4.0" ry="3.3" fill="url(#pga)"/><ellipse cx="102.6" cy="56.7" rx="4.1" ry="3.1" fill="url(#pgc)"/><ellipse cx="133.5" cy="76.1" rx="4.1" ry="3.1" fill="url(#pgc)"/><ellipse cx="65.2" cy="12.7" rx="4.0" ry="3.3" fill="url(#pga)"/><ellipse cx="-4.1" cy="102.5" rx="4.0" ry="3.2" fill="url(#pgb)"/><ellipse cx="139.9" cy="102.5" rx="4.0" ry="3.2" fill="url(#pgb)"/><ellipse cx="97.8" cy="16.5" rx="4.3" ry="2.9" fill="url(#pgc)"/><ellipse cx="133.1" cy="4.7" rx="4.2" ry="3.3" fill="url(#pga)"/><ellipse cx="79.4" cy="113.5" rx="4.2" ry="3.1" fill="url(#pgc)"/><ellipse cx="50.8" cy="54.0" rx="4.2" ry="3.0" fill="url(#pga)"/><ellipse cx="85.7" cy="112.9" rx="4.2" ry="2.9" fill="url(#pgc)"/><ellipse cx="135.4" cy="59.3" rx="4.0" ry="2.9" fill="url(#pgc)"/><ellipse cx="36.3" cy="120.7" rx="3.9" ry="3.0" fill="url(#pgc)"/><ellipse cx="65.9" cy="34.1" rx="4.1" ry="3.3" fill="url(#pgb)"/><ellipse cx="48.9" cy="85.7" rx="4.3" ry="3.2" fill="url(#pgb)"/><ellipse cx="17.4" cy="98.3" rx="3.8" ry="3.2" fill="url(#pga)"/><ellipse cx="128.7" cy="95.9" rx="3.8" ry="3.1" fill="url(#pgb)"/><ellipse cx="137.2" cy="128.4" rx="3.9" ry="3.1" fill="url(#pgc)"/><ellipse cx="82.8" cy="118.9" rx="4.3" ry="3.0" fill="url(#pga)"/><ellipse cx="102.0" cy="65.5" rx="4.0" ry="3.0" fill="url(#pgb)"/><ellipse cx="28.0" cy="106.0" rx="4.1" ry="3.1" fill="url(#pgb)"/><ellipse cx="1.9" cy="124.4" rx="4.2" ry="3.2" fill="url(#pgc)"/><ellipse cx="145.9" cy="124.4" rx="4.2" ry="3.2" fill="url(#pgc)"/><ellipse cx="23.6" cy="91.0" rx="4.4" ry="3.0" fill="url(#pgb)"/><ellipse cx="130.4" cy="55.1" rx="3.9" ry="3.1" fill="url(#pgb)"/><ellipse cx="128.1" cy="132.0" rx="3.8" ry="3.2" fill="url(#pgb)"/><ellipse cx="3.0" cy="33.2" rx="4.3" ry="3.3" fill="url(#pgb)"/><ellipse cx="147.0" cy="33.2" rx="4.3" ry="3.3" fill="url(#pgb)"/><ellipse cx="94.0" cy="74.1" rx="3.8" ry="3.1" fill="url(#pgc)"/><ellipse cx="-0.1" cy="65.7" rx="3.9" ry="3.3" fill="url(#pgb)"/><ellipse cx="143.9" cy="65.7" rx="3.9" ry="3.3" fill="url(#pgb)"/><ellipse cx="37.1" cy="65.4" rx="4.1" ry="3.2" fill="url(#pga)"/><ellipse cx="41.7" cy="41.6" rx="4.4" ry="3.2" fill="url(#pgb)"/><ellipse cx="114.4" cy="44.6" rx="4.0" ry="3.2" fill="url(#pgc)"/><ellipse cx="89.1" cy="15.1" rx="4.1" ry="3.2" fill="url(#pga)"/><ellipse cx="38.3" cy="52.7" rx="4.0" ry="3.0" fill="url(#pgc)"/><ellipse cx="55.7" cy="87.7" rx="4.3" ry="3.0" fill="url(#pgc)"/><ellipse cx="8.6" cy="116.0" rx="3.9" ry="3.0" fill="url(#pga)"/><ellipse cx="101.6" cy="25.2" rx="3.9" ry="3.0" fill="url(#pgb)"/><ellipse cx="98.0" cy="4.8" rx="4.1" ry="3.2" fill="url(#pgb)"/><ellipse cx="-1.1" cy="97.7" rx="4.2" ry="2.9" fill="url(#pga)"/><ellipse cx="142.9" cy="97.7" rx="4.2" ry="2.9" fill="url(#pga)"/><ellipse cx="38.5" cy="126.8" rx="4.1" ry="3.0" fill="url(#pgc)"/><ellipse cx="15.9" cy="107.5" rx="4.0" ry="3.0" fill="url(#pgc)"/><ellipse cx="-0.9" cy="89.8" rx="4.2" ry="3.0" fill="url(#pgc)"/><ellipse cx="143.1" cy="89.8" rx="4.2" ry="3.0" fill="url(#pgc)"/><ellipse cx="134.5" cy="117.3" rx="4.1" ry="3.0" fill="url(#pgb)"/><ellipse cx="69.5" cy="105.3" rx="3.9" ry="3.1" fill="url(#pgc)"/><ellipse cx="26.4" cy="22.7" rx="4.0" ry="3.3" fill="url(#pgb)"/><ellipse cx="84.4" cy="82.7" rx="4.0" ry="2.9" fill="url(#pgc)"/><ellipse cx="13.1" cy="66.5" rx="3.9" ry="2.9" fill="url(#pgb)"/><ellipse cx="73.5" cy="71.1" rx="4.0" ry="3.2" fill="url(#pga)"/><ellipse cx="95.4" cy="95.7" rx="4.1" ry="3.1" fill="url(#pgb)"/><ellipse cx="54.0" cy="105.6" rx="3.8" ry="3.0" fill="url(#pga)"/><ellipse cx="99.1" cy="76.7" rx="4.3" ry="3.0" fill="url(#pga)"/><ellipse cx="40.1" cy="132.5" rx="4.3" ry="3.2" fill="url(#pgc)"/><ellipse cx="97.7" cy="117.4" rx="4.1" ry="3.2" fill="url(#pgc)"/><ellipse cx="31.9" cy="124.8" rx="4.0" ry="3.0" fill="url(#pgc)"/><ellipse cx="64.0" cy="131.8" rx="4.0" ry="3.1" fill="url(#pga)"/><ellipse cx="2.3" cy="21.8" rx="3.9" ry="2.9" fill="url(#pgb)"/><ellipse cx="146.3" cy="21.8" rx="3.9" ry="2.9" fill="url(#pgb)"/><ellipse cx="54.0" cy="0.1" rx="4.4" ry="3.0" fill="url(#pgc)"/><ellipse cx="54.0" cy="144.1" rx="4.4" ry="3.0" fill="url(#pgc)"/><ellipse cx="64.2" cy="114.2" rx="4.2" ry="3.0" fill="url(#pgc)"/><ellipse cx="54.6" cy="42.6" rx="4.3" ry="3.1" fill="url(#pgb)"/><ellipse cx="73.1" cy="20.6" rx="4.3" ry="3.2" fill="url(#pgc)"/><ellipse cx="19.5" cy="123.8" rx="4.3" ry="3.0" fill="url(#pgb)"/><ellipse cx="55.4" cy="115.7" rx="4.1" ry="3.2" fill="url(#pgb)"/><ellipse cx="-3.2" cy="17.0" rx="3.9" ry="2.9" fill="url(#pgb)"/><ellipse cx="140.8" cy="17.0" rx="3.9" ry="2.9" fill="url(#pgb)"/><ellipse cx="128.5" cy="120.5" rx="3.9" ry="3.0" fill="url(#pgc)"/><ellipse cx="42.4" cy="122.6" rx="4.2" ry="2.9" fill="url(#pgc)"/><ellipse cx="127.1" cy="50.9" rx="4.2" ry="3.1" fill="url(#pgb)"/><ellipse cx="124.1" cy="109.5" rx="4.1" ry="3.0" fill="url(#pgc)"/><ellipse cx="5.8" cy="67.1" rx="4.2" ry="3.0" fill="url(#pga)"/><ellipse cx="105.2" cy="96.4" rx="4.3" ry="3.1" fill="url(#pgb)"/><ellipse cx="100.8" cy="46.7" rx="4.3" ry="3.0" fill="url(#pgb)"/><ellipse cx="116.5" cy="15.7" rx="4.3" ry="3.1" fill="url(#pga)"/><ellipse cx="-2.5" cy="59.8" rx="4.3" ry="3.2" fill="url(#pgc)"/><ellipse cx="141.5" cy="59.8" rx="4.3" ry="3.2" fill="url(#pgc)"/><ellipse cx="138.7" cy="11.8" rx="4.3" ry="3.0" fill="url(#pgc)"/><ellipse cx="128.4" cy="17.6" rx="4.1" ry="3.1" fill="url(#pga)"/><ellipse cx="44.4" cy="15.2" rx="4.1" ry="2.9" fill="url(#pgb)"/><ellipse cx="137.3" cy="85.6" rx="3.8" ry="3.2" fill="url(#pgc)"/><ellipse cx="72.9" cy="139.3" rx="4.3" ry="3.1" fill="url(#pga)"/><ellipse cx="133.3" cy="32.2" rx="4.3" ry="3.0" fill="url(#pgc)"/><ellipse cx="40.7" cy="115.9" rx="4.2" ry="3.1" fill="url(#pgc)"/><ellipse cx="74.1" cy="15.0" rx="4.0" ry="2.9" fill="url(#pgc)"/><ellipse cx="39.9" cy="75.7" rx="4.1" ry="3.0" fill="url(#pga)"/><ellipse cx="110.5" cy="82.5" rx="4.3" ry="2.9" fill="url(#pgb)"/><ellipse cx="74.7" cy="93.7" rx="4.4" ry="3.2" fill="url(#pgc)"/><ellipse cx="60.7" cy="1.6" rx="4.0" ry="3.1" fill="url(#pgc)"/><ellipse cx="60.7" cy="145.6" rx="4.0" ry="3.1" fill="url(#pgc)"/><ellipse cx="53.6" cy="33.1" rx="4.2" ry="3.2" fill="url(#pgc)"/><ellipse cx="1.0" cy="75.9" rx="4.0" ry="2.9" fill="url(#pga)"/><ellipse cx="145.0" cy="75.9" rx="4.0" ry="2.9" fill="url(#pga)"/><ellipse cx="104.2" cy="19.3" rx="3.8" ry="3.2" fill="url(#pgb)"/><ellipse cx="31.9" cy="33.2" rx="4.0" ry="3.0" fill="url(#pgb)"/><ellipse cx="42.8" cy="26.9" rx="4.0" ry="3.2" fill="url(#pgc)"/><ellipse cx="102.6" cy="131.4" rx="4.0" ry="2.9" fill="url(#pgb)"/><ellipse cx="111.6" cy="36.7" rx="4.2" ry="3.0" fill="url(#pgc)"/><ellipse cx="117.8" cy="0.3" rx="4.0" ry="3.1" fill="url(#pga)"/><ellipse cx="117.8" cy="144.3" rx="4.0" ry="3.1" fill="url(#pga)"/><ellipse cx="59.9" cy="31.3" rx="3.8" ry="3.2" fill="url(#pga)"/><ellipse cx="44.7" cy="64.5" rx="3.8" ry="2.9" fill="url(#pgc)"/><ellipse cx="128.0" cy="59.3" rx="3.9" ry="3.1" fill="url(#pga)"/><ellipse cx="92.7" cy="58.7" rx="4.3" ry="3.0" fill="url(#pga)"/><ellipse cx="79.3" cy="122.7" rx="3.9" ry="3.1" fill="url(#pga)"/><ellipse cx="65.8" cy="122.8" rx="4.1" ry="3.0" fill="url(#pga)"/><ellipse cx="78.2" cy="-0.6" rx="3.9" ry="2.9" fill="url(#pgc)"/><ellipse cx="78.2" cy="143.4" rx="3.9" ry="2.9" fill="url(#pgc)"/><ellipse cx="7.7" cy="24.2" rx="4.3" ry="3.0" fill="url(#pga)"/><ellipse cx="28.1" cy="94.1" rx="4.1" ry="2.9" fill="url(#pga)"/><ellipse cx="21.9" cy="31.8" rx="4.4" ry="3.3" fill="url(#pgb)"/><ellipse cx="110.1" cy="1.3" rx="4.1" ry="2.9" fill="url(#pgb)"/><ellipse cx="110.1" cy="145.3" rx="4.1" ry="2.9" fill="url(#pgb)"/><ellipse cx="57.9" cy="52.6" rx="4.4" ry="2.9" fill="url(#pga)"/><ellipse cx="14.0" cy="118.6" rx="3.8" ry="3.2" fill="url(#pgb)"/><ellipse cx="6.3" cy="85.1" rx="3.9" ry="3.0" fill="url(#pga)"/><ellipse cx="9.4" cy="44.1" rx="4.1" ry="3.1" fill="url(#pga)"/><ellipse cx="93.9" cy="123.9" rx="3.8" ry="3.1" fill="url(#pgb)"/><ellipse cx="48.9" cy="124.6" rx="3.8" ry="2.9" fill="url(#pga)"/><ellipse cx="104.8" cy="101.4" rx="4.3" ry="3.2" fill="url(#pgc)"/><ellipse cx="123.1" cy="84.1" rx="4.2" ry="3.2" fill="url(#pgc)"/><ellipse cx="130.7" cy="21.8" rx="4.2" ry="3.0" fill="url(#pgc)"/><ellipse cx="44.6" cy="56.6" rx="4.0" ry="2.9" fill="url(#pgc)"/><ellipse cx="71.9" cy="130.3" rx="4.2" ry="3.3" fill="url(#pga)"/><ellipse cx="69.5" cy="109.9" rx="4.2" ry="2.9" fill="url(#pgb)"/><ellipse cx="20.4" cy="-2.9" rx="4.0" ry="3.3" fill="url(#pga)"/><ellipse cx="20.4" cy="141.1" rx="4.0" ry="3.3" fill="url(#pga)"/><ellipse cx="75.8" cy="29.7" rx="4.1" ry="3.1" fill="url(#pgb)"/><ellipse cx="66.8" cy="22.3" rx="3.8" ry="3.0" fill="url(#pga)"/><ellipse cx="9.4" cy="99.9" rx="4.3" ry="3.2" fill="url(#pga)"/><ellipse cx="67.6" cy="85.9" rx="4.1" ry="3.2" fill="url(#pga)"/><ellipse cx="20.6" cy="12.4" rx="4.4" ry="3.0" fill="url(#pga)"/><ellipse cx="-2.0" cy="39.3" rx="4.0" ry="3.0" fill="url(#pgc)"/><ellipse cx="142.0" cy="39.3" rx="4.0" ry="3.0" fill="url(#pgc)"/><ellipse cx="110.1" cy="93.4" rx="4.4" ry="3.0" fill="url(#pgc)"/><ellipse cx="21.7" cy="80.1" rx="3.9" ry="3.1" fill="url(#pga)"/><ellipse cx="87.3" cy="104.6" rx="4.3" ry="3.0" fill="url(#pgc)"/><ellipse cx="59.4" cy="70.0" rx="4.0" ry="3.1" fill="url(#pgb)"/><ellipse cx="31.1" cy="64.9" rx="4.3" ry="3.0" fill="url(#pga)"/><ellipse cx="88.6" cy="9.8" rx="4.2" ry="2.9" fill="url(#pgb)"/><ellipse cx="91.0" cy="5.6" rx="4.0" ry="3.1" fill="url(#pgb)"/><ellipse cx="116.6" cy="52.6" rx="4.0" ry="3.3" fill="url(#pgc)"/><ellipse cx="89.3" cy="26.0" rx="4.3" ry="3.2" fill="url(#pgb)"/><ellipse cx="59.6" cy="45.2" rx="3.9" ry="2.9" fill="url(#pgc)"/><ellipse cx="-0.6" cy="2.6" rx="4.0" ry="3.2" fill="url(#pga)"/><ellipse cx="-0.6" cy="146.6" rx="4.0" ry="3.2" fill="url(#pga)"/><ellipse cx="143.4" cy="2.6" rx="4.0" ry="3.2" fill="url(#pga)"/><ellipse cx="143.4" cy="146.6" rx="4.0" ry="3.2" fill="url(#pga)"/><ellipse cx="36.5" cy="98.0" rx="3.9" ry="2.9" fill="url(#pga)"/><ellipse cx="57.4" cy="101.1" rx="4.3" ry="3.1" fill="url(#pgc)"/><ellipse cx="122.6" cy="126.8" rx="3.8" ry="3.3" fill="url(#pgc)"/><ellipse cx="14.0" cy="75.1" rx="4.1" ry="3.2" fill="url(#pgb)"/><ellipse cx="52.8" cy="77.0" rx="4.4" ry="3.0" fill="url(#pgc)"/><ellipse cx="12.7" cy="130.8" rx="4.0" ry="2.9" fill="url(#pgb)"/><ellipse cx="89.6" cy="49.9" rx="4.0" ry="3.0" fill="url(#pgb)"/><ellipse cx="70.0" cy="65.6" rx="4.0" ry="3.0" fill="url(#pga)"/><ellipse cx="33.7" cy="15.8" rx="4.1" ry="3.2" fill="url(#pgc)"/><ellipse cx="57.8" cy="92.0" rx="4.3" ry="3.1" fill="url(#pgb)"/><ellipse cx="69.6" cy="30.1" rx="4.1" ry="3.2" fill="url(#pgc)"/><ellipse cx="32.4" cy="42.5" rx="3.9" ry="3.3" fill="url(#pgb)"/><ellipse cx="77.9" cy="104.3" rx="4.3" ry="3.3" fill="url(#pga)"/><ellipse cx="29.4" cy="132.8" rx="4.2" ry="3.2" fill="url(#pgb)"/><ellipse cx="-3.2" cy="34.4" rx="4.3" ry="2.9" fill="url(#pgc)"/><ellipse cx="140.8" cy="34.4" rx="4.3" ry="2.9" fill="url(#pgc)"/><ellipse cx="17.7" cy="92.7" rx="3.9" ry="3.0" fill="url(#pgb)"/><ellipse cx="99.4" cy="31.4" rx="4.2" ry="3.2" fill="url(#pga)"/><ellipse cx="114.6" cy="20.5" rx="4.3" ry="3.2" fill="url(#pgb)"/><ellipse cx="25.4" cy="115.8" rx="3.9" ry="3.2" fill="url(#pga)"/><ellipse cx="36.6" cy="112.5" rx="4.0" ry="3.1" fill="url(#pgb)"/></pattern>
<pattern id="gl" width="23" height="6" patternUnits="userSpaceOnUse" x="0" y="665"><rect x="0" y="5" width="15" height="0.8" fill="#c4c4c8" fill-opacity="0.3"/><rect x="11" y="2" width="9" height="0.8" fill="#f2f2f4" fill-opacity="0.5"/></pattern>
<linearGradient id="glm" x1="0" y1="660" x2="0" y2="881" gradientUnits="userSpaceOnUse"><stop offset="0" stop-color="#fff" stop-opacity="0"/><stop offset="0.1" stop-color="#fff" stop-opacity="1"/><stop offset="1" stop-color="#fff" stop-opacity="1"/></linearGradient>
<mask id="glmask"><rect x="423" y="660" width="561" height="221" fill="url(#glm)"/></mask>
<pattern id="peb2" href="#peb" patternTransform="scale(0.66 0.8)"/>
<linearGradient id="stsh" x1="504" y1="0" x2="562.5" y2="0" gradientUnits="userSpaceOnUse"><stop offset="0" stop-color="#4a5a64" stop-opacity="0.22"/><stop offset="0.35" stop-color="#4a5a64" stop-opacity="0.06"/><stop offset="1" stop-color="#fff" stop-opacity="0.04"/></linearGradient>
<linearGradient id="cylsh" x1="552.5" y1="0" x2="800" y2="0" gradientUnits="userSpaceOnUse">
<stop offset="0" stop-color="#5a6a72" stop-opacity="0.25"/><stop offset="0.15" stop-color="#5a6a72" stop-opacity="0.05"/><stop offset="0.6" stop-color="#fff" stop-opacity="0.06"/><stop offset="0.92" stop-color="#5a6a72" stop-opacity="0.05"/><stop offset="1" stop-color="#5a6a72" stop-opacity="0.2"/>
</linearGradient>
<linearGradient id="disc" x1="0" y1="461" x2="0" y2="479" gradientUnits="userSpaceOnUse">
<stop offset="0" stop-color="#fdfdfe"/><stop offset="1" stop-color="#f1f3f5"/>
</linearGradient>
</defs>
<rect x="423" y="64" width="561" height="817" fill="url(#sky)"/>
<ellipse cx="645.5" cy="1528.4" rx="2000" ry="978.4" fill="url(#gnd)"/>
<rect x="423" y="660" width="561" height="221" fill="url(#gl)" mask="url(#glmask)"/>
<ellipse cx="671" cy="157" rx="165" ry="45" fill="#dfe0e3"/>
<path d="M552.3,470 H800.4 L794,881 H555 Z" fill="url(#peb)"/>
<path d="M552.3,470 H800.4 L794,881 H555 Z" fill="url(#cylsh)"/>
<ellipse cx="669.5" cy="470.3" rx="161.5" ry="8.8" fill="url(#disc)"/>
<path d="M504,154 C505,140 523,124 562.5,119.5 V474.2 C531,472.6 511,470 505,467.6 Z" fill="url(#peb2)"/>
<path d="M504,154 C505,140 523,124 562.5,119.5 V474.2 C531,472.6 511,470 505,467.6 Z" fill="url(#stsh)"/>
<path d="M424,282.3 L447.2,293.8 V368.8 L424,380.4 Z" fill="#fff"/>
<path d="M431.6,332 L437,325.9 V338.1 Z" fill="#111"/>
<path d="M984,320.2 L960.2,331.8 V408.1 L984,419.7 Z" fill="#fff"/>
<path d="M974,370.3 L967.9,364.5 V376.1 Z" fill="#111"/>
</svg>
<div class="abs" style="left:17.5px;top:708.3px;width:44.7px;height:44.2px;background:#fff;border-radius:2px"></div>
<div class="abs" style="left:72px;top:708.3px;width:324px;height:44.2px;background:#fff;border-radius:2px"></div>
<div class="abs" style="left:82px;top:713px;width:141px;height:35px;border:1px solid #dcdcdc;border-radius:3px;background:#fff"></div>
<div class="abs" style="left:98.3px;top:723px;font-size:13px;line-height:15px;color:#333">Floor 2</div>
<div class="abs" style="left:235.5px;top:716px;width:1px;height:30px;background:#e4e4e4"></div>
<div class="abs" style="left:246px;top:719.4px;width:19.8px;height:18.8px;background:#2e72f0;border-radius:2px"></div>
<div class="abs" style="left:280.2px;top:721px;font-size:15.5px;line-height:18px;color:#333;white-space:nowrap">Show All Floors</div>
<div class="abs" style="left:17.7px;top:764.7px;width:523px;height:43px;background:rgba(255,255,255,0.9);border-radius:2px"></div>
<div class="abs" style="left:255.3px;top:768px;width:86.5px;height:33px;background:rgba(222,233,250,0.8)"></div>
<div class="abs" style="left:93.5px;top:777.5px;font-size:17px;line-height:20px;color:#555">Plane</div>
<div class="abs" style="left:146px;top:781px;font-size:13px;line-height:15px;color:#999">1</div>
<div class="abs" style="left:186.5px;top:777.5px;font-size:17px;line-height:20px;color:#555;transform:scaleX(0.84);transform-origin:0 0">RCP</div>
<div class="abs" style="left:224.7px;top:781px;font-size:13px;line-height:15px;color:#999">2</div>
<div class="abs" style="left:316.6px;top:776.4px;width:14.6px;height:16.4px;background:#d3e1f7"></div>
<div class="abs" style="left:265.4px;top:776.3px;font-size:16.6px;line-height:20px;font-weight:bold;color:#3679ef">Roam</div>
<div class="abs" style="left:320.3px;top:778.5px;font-size:13px;line-height:15px;color:#5a8ef0">4</div>
<svg class="abs" style="left:0;top:0" width="561" height="817" viewBox="423 64 561 817">
<path d="M461.9,781.3 L473.8,789.5 L461.9,797.5 L450.1,789.5 Z" fill="#a3a3a3"/>
<circle cx="461.9" cy="789.5" r="4.7" fill="#fff"/>
<path d="M461.9,786.4 V792.6 M458.8,789.5 H465" stroke="#a3a3a3" stroke-width="1.5"/>
<path d="M450.6,794.4 L461.9,802 L473.2,794.4" fill="none" stroke="#a3a3a3" stroke-width="2.4"/>
<path d="M473.5,810 L478,805.5 V810 Z" fill="#333"/>
<rect x="455" y="839" width="22" height="22.6" fill="#ababab"/>
<path d="M455,850.4 C458.5,847.5 461.5,844 463.2,839 M456,861.6 C461,859.5 463.5,856 464.5,852 C465.5,847 467.5,842 470.8,839 M466.6,861.6 C467.2,857.5 469,854.5 471.5,852.4 C473.5,850.6 475.5,849.3 477,848.4" fill="none" stroke="#fff" stroke-width="1.3"/>
<path d="M476.5,865 L481,860.5 V865 Z" fill="#333"/>
<rect x="491" y="832" width="1" height="34" fill="#e2e2e2"/>
<path d="M673.4,793 L677.6,797.2 L684.6,788.6" fill="none" stroke="#fff" stroke-width="1.9"/>
<path d="M621.5,790 L627.5,796.5 L633.5,790" fill="none" stroke="#555" stroke-width="1.6"/>
<path d="M758.2,865.7 A30.1,30.1 0 0 1 772.5,840.1 L788.3,865.7 Z" fill="#2f7af7"/>
<path d="M772.5,840.1 A30.1,30.1 0 0 1 803.4,839.6 L788.3,865.7 Z" fill="#dedede"/>
<path d="M803.4,839.6 A30.1,30.1 0 0 1 818.4,865.7 L788.3,865.7 Z" fill="#cbcbcb"/>
<path d="M778.9,865.7 A9.4,9.4 0 0 1 797.7,865.7 Z" fill="#fff"/>
<path d="M768.3,855 L783,856.5 L778.6,865.7 Z" fill="#fff"/>
<path d="M772,857.5 L783,856.5 L780,861 Z" fill="#9aa0aa"/>
<g fill="none" stroke="#333" stroke-width="1.3">
<rect x="844.6" y="842.6" width="18.8" height="15"/>
<path d="M844.3,845 L840.5,843.8 V855.2 L844.3,854"/>
<path d="M860.6,860.6 C856,856 854.4,853.6 854.4,851.2 C854.4,847.8 857.2,845 860.6,845 C864,845 866.8,847.8 866.8,851.2 C866.8,853.6 865.2,856 860.6,860.6 Z" fill="#fff"/>
<circle cx="860.6" cy="851.2" r="2"/>
<rect x="889.4" y="842.6" width="19.2" height="15"/>
<path d="M889.1,845 L885.5,843.8 V855.2 L889.1,854"/>
<circle cx="903.9" cy="854.2" r="2"/>
</g>
<path d="M903.9,846.8 l1.6,0.2 0.5,1.8 1.6,0.9 1.7,-0.6 1.1,1.3 -0.6,1.7 0.8,1.6 1.8,0.5 0.2,1.7 -1.7,0.6 -0.5,1.8 1,1.5 -1,1.4 -1.8,-0.4 -1.5,1 -0.4,1.8 -1.7,0.1 -0.7,-1.7 -1.8,-0.2 -1.3,1.2 -1.5,-0.9 0.4,-1.8 -1.2,-1.4 -1.8,0.1 -0.5,-1.6 1.5,-1 0,-1.8 -1.5,-1 0.6,-1.6 1.8,0.1 1.1,-1.4 -0.5,-1.8 1.5,-0.8 1.3,1.2 z" fill="#fff" stroke="#333" stroke-width="1.2" transform="translate(-1.6,-0.2) scale(1) "/>
<circle cx="903.9" cy="854.2" r="2" fill="#fff" stroke="#333" stroke-width="1.2"/>
<path d="M862,864.4 L866,860.4 V864.4 Z M907,864.4 L911,860.4 V864.4 Z" fill="#111"/>
<rect x="933.4" y="841.9" width="17.6" height="17.4" fill="none" stroke="#333" stroke-width="1.4"/>
<path d="M948.4,844.6 L943.2,849.8 M943.2,845.2 V849.8 H947.8 M936,856.6 L941.2,851.4 M936,852 V856.6 H940.6" fill="none" stroke="#333" stroke-width="1.3"/>
</svg>
</div>
<div id="right">
<svg class="abs" style="left:0;top:0" width="296" height="230" viewBox="984 64 296 230">
<defs>
<pattern id="wood" width="80" height="30" patternUnits="userSpaceOnUse" x="1000" y="70">
<rect width="80" height="30" fill="#cfad85"/>
<rect x="2" y="1" width="30" height="3" fill="#d5b38c"/>
<rect x="40" y="4" width="34" height="2" fill="#c5a27a"/>
<rect x="10" y="9" width="28" height="2" fill="#c7a47b"/>
<rect x="44" y="11" width="26" height="3" fill="#d4b28a"/>
<rect x="0" y="16" width="22" height="3" fill="#d3b189"/>
<rect x="30" y="19" width="32" height="2" fill="#c6a37a"/>
<rect x="60" y="23" width="20" height="3" fill="#d5b38b"/>
<rect x="6" y="25" width="30" height="2" fill="#c8a57c"/>
</pattern>
</defs>
<rect x="984" y="64" width="296" height="229" fill="#eff1f6"/>
<ellipse cx="1131" cy="178.4" rx="123" ry="109" fill="url(#wood)" stroke="#8e8e8e" stroke-width="9.5"/>
<ellipse cx="1131" cy="178.4" rx="118.2" ry="104.2" fill="none" stroke="#6f6f6f" stroke-width="0.8"/>
<rect x="1087.5" y="176.4" width="88" height="8.4" fill="#fff" fill-opacity="0.85"/>
<path d="M984,262.7 V292.5 H1011.8 Z" fill="#fff"/>
<path d="M986,284 L993,291 M988.5,279.8 L998,289.3 M991,275.8 L1001.5,286.3" stroke="#222" stroke-width="1.2"/>
<rect x="1236" y="72.9" width="36" height="36" fill="#f8f9fc"/>
<g fill="none" stroke="#7a7a7a" stroke-width="1.5">
<path d="M1249.9,78.5 H1241.6 V102.7 H1265.6 V94.4"/>
<rect x="1253.2" y="78.5" width="12.4" height="12.4"/>
<path d="M1253.2,90.9 L1246,98.2 M1246,91.7 V98.2 H1253.2"/>
</g>
<rect x="1064.5" y="255.8" width="143.2" height="30" rx="2" fill="#f4f2ee" fill-opacity="0.96"/>
<rect x="984" y="292" width="296" height="1.5" fill="#d9d9d9"/>
</svg>
<div class="abs" style="left:103.5px;top:112.6px;width:88px;font-size:6.2px;line-height:8px;font-weight:bold;color:#333;text-align:center;white-space:nowrap">Rapunzel's Main Living Space</div>
<div class="abs" style="left:80.5px;top:198.8px;width:143.2px;font-size:13px;line-height:15px;color:#5e5e5e;text-align:center">Single Room Mode</div>
<div class="abs" style="left:8px;top:254px;font-size:14.5px;line-height:17px;font-weight:bold;color:#4a4a4a">Wall Settings</div>
<div class="abs" style="left:0;top:229px;width:1px;height:588px;background:#e2e2e2"></div>
<div class="rl" style="top:307px">Lock Walls</div>
<div class="abs" style="left:77px;top:302px;width:59px;height:25px;border-radius:12.5px;background:#bdbdbd"></div>
<div class="abs" style="left:79.5px;top:304px;width:21px;height:21px;border-radius:10.5px;background:#fff;box-shadow:0 0 0 1px #ababab"></div>
<div class="abs" style="left:108.5px;top:307px;font-size:13px;line-height:15px;color:#fff">Off</div>
<div class="rl" style="top:356px">Wall Height</div>
<div class="rl" style="top:400px">Wall Thickness</div>
<div class="rl" style="top:443.5px">Floor Thickness</div>
<div class="inp" style="top:350px">25' 0"</div>
<div class="inp" style="top:392px">0' 9"</div>
<div class="inp" style="top:436px">0' 4"</div>
<div class="btn" style="left:7px;width:133px">Delete Walls</div>
<div class="btn" style="left:150px;width:113px">Edit Floor</div>
<svg class="abs" style="left:0;top:470px" width="296" height="50" viewBox="984 534 296 50">
<g fill="#777" transform="translate(0,0.8)">
<rect x="1007.2" y="554" width="12.6" height="1.8"/>
<rect x="1011" y="552.6" width="5" height="1.6"/>
<path d="M1008.6,556.8 H1018.4 V566.6 H1008.6 Z M1010.6,558.6 V564.8 H1012.2 V558.6 Z M1014.8,558.6 V564.8 H1016.4 V558.6 Z" fill-rule="evenodd"/>
</g>
<rect x="1150.3" y="556.2" width="10.4" height="10.4" fill="#7a7a7a"/>
<path d="M1154.6,562.4 L1162.2,554.6" stroke="#fff" stroke-width="4.6" stroke-linecap="round"/>
<path d="M1154.6,562.4 L1162.2,554.6" stroke="#7a7a7a" stroke-width="2.2" stroke-linecap="round"/>
</svg>
</div>
</body></html>
